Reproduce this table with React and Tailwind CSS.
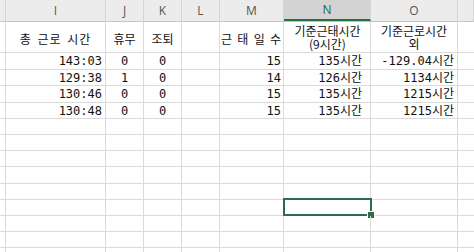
const cols = [
  { key: 'H', w: 'w-[6px]', letter: '' },
  { key: 'I', w: 'w-[100px]', letter: 'I' },
  { key: 'J', w: 'w-[38px]', letter: 'J' },
  { key: 'K', w: 'w-[38px]', letter: 'K' },
  { key: 'L', w: 'w-[38px]', letter: 'L' },
  { key: 'M', w: 'w-[64px]', letter: 'M' },
  { key: 'N', w: 'w-[87px]', letter: 'N' },
  { key: 'O', w: 'w-[87px]', letter: 'O' },
  { key: 'P', w: 'w-[16px]', letter: '' },
];

// text alignment per column in the data rows
const align = {
  H: 'justify-end',
  I: 'justify-end pr-[3px]',
  J: 'justify-center',
  K: 'justify-center',
  L: 'justify-center',
  M: 'justify-end pr-[2px]',
  N: 'justify-end pr-[8px]',
  O: 'justify-end pr-[3px]',
  P: 'justify-end',
};

const data = [
  { I: '143:03', J: '0', K: '0', M: '15', N: '135시간', O: '-129.04시간' },
  { I: '129:38', J: '1', K: '0', M: '14', N: '126시간', O: '1134시간' },
  { I: '130:46', J: '0', K: '0', M: '15', N: '135시간', O: '1215시간' },
  { I: '130:48', J: '0', K: '0', M: '15', N: '135시간', O: '1215시간' },
];

const rowHeights = ['h-[17px]', 'h-[16px]', 'h-[17px]', 'h-[16px]', 'h-[16px]', 'h-[16px]', 'h-[16px]', 'h-[17px]', 'h-[16px]', 'h-[16px]', 'h-[16px]', 'h-[16px]', 'h-[16px]'];

const ColumnHeader = () => (
  <div className="flex h-[22px] bg-[#ececec] border-b border-[#c6c6c6]">
    {cols.map((c) => (
      <div
        key={c.key}
        className={`${c.w} shrink-0 flex items-center justify-center border-r border-[#d6d6d6] text-[12px] font-['Open_Sans',sans-serif] ${
          c.key === 'N'
            ? 'bg-[#d3d3d3] text-[#1e6b41] border-b-2 border-b-[#217346]'
            : 'text-[#555]'
        }`}
      >
        {c.letter}
      </div>
    ))}
  </div>
);

const TitleRow = () => (
  <div className="flex h-[31px] border-b border-[#dadada] text-[12px] leading-[13px] text-[#111] font-['Noto_Sans_CJK_KR',sans-serif]">
    <div className="w-[6px] shrink-0 border-r border-[#dadada]" />
    <div className="w-[100px] shrink-0 border-r border-[#dadada] flex items-center justify-center pt-[3px] tracking-[1px] [word-spacing:2px]">
      총 근로 시간
    </div>
    <div className="w-[38px] shrink-0 border-r border-[#dadada] flex items-center justify-center pt-[3px]">
      휴무
    </div>
    <div className="w-[38px] shrink-0 border-r border-[#dadada] flex items-center justify-center pt-[3px]">
      조퇴
    </div>
    <div className="w-[38px] shrink-0 border-r border-[#dadada]" />
    <div className="w-[64px] shrink-0 border-r border-[#dadada] flex items-center justify-between pt-[3px] pl-[1px] pr-[2px]">
      <span>근</span>
      <span>태</span>
      <span>일</span>
      <span>수</span>
    </div>
    <div className="w-[87px] shrink-0 border-r border-[#dadada] flex flex-col items-center justify-center pl-[1px]">
      <span className="block h-[13px]">기준근태시간</span>
      <span className="block h-[13px]">(9시간)</span>
    </div>
    <div className="w-[87px] shrink-0 border-r border-[#dadada] flex flex-col items-center justify-center">
      <span className="block h-[13px]">기준근로시간</span>
      <span className="block h-[13px]">외</span>
    </div>
    <div className="w-[16px] shrink-0" />
  </div>
);

export default function App() {
  return (
    <div className="w-[474px] h-[252px] overflow-hidden bg-white font-['DejaVu_Sans_Mono','Noto_Sans_CJK_KR',monospace]">
      <ColumnHeader />
      <TitleRow />
      {rowHeights.map((h, i) => {
        const row = data[i] || {};
        return (
          <div key={i} className={`flex ${h} border-b border-[#dadada] text-[12px] leading-none text-[#111]`}>
            {cols.map((c) => (
              <div
                key={c.key}
                className={`${c.w} shrink-0 flex items-center ${align[c.key]} ${c.key !== 'P' ? 'border-r border-[#dadada]' : ''} relative`}
              >
                {row[c.key]}
                {i === 9 && c.key === 'N' && (
                  <div className="absolute -top-[2px] -left-[1px] -right-[2px] -bottom-px border-2 border-[#2f6b4b]">
                    <div className="absolute -right-[4px] -bottom-[4px] w-[6px] h-[6px] bg-[#2f6b4b] outline outline-1 outline-white" />
                  </div>
                )}
              </div>
            ))}
          </div>
        );
      })}
    </div>
  );
}
